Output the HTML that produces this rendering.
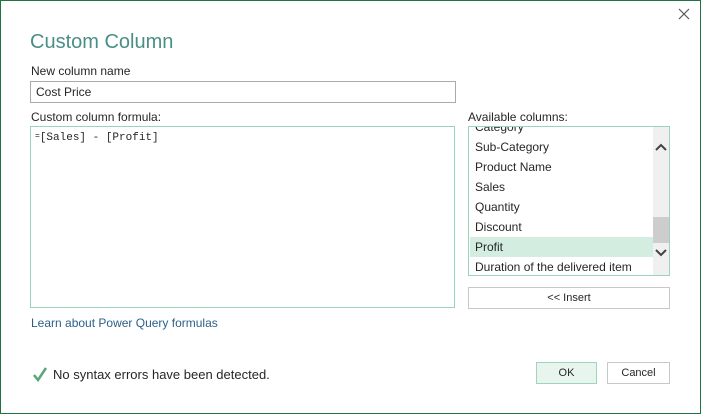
<!DOCTYPE html><html><head><style>
body{margin:0;width:701px;height:414px;overflow:hidden;background:#fff;font-family:"Liberation Sans",sans-serif;font-size:12px;color:#262626}
.win{position:absolute;left:0;top:0;width:699px;height:412px;border:1px solid #217346;background:#fff}
.a{position:absolute}
.it{position:absolute;left:1px;width:183px;height:20px;line-height:20px;padding-left:5px;font-size:12px}
</style></head><body><div class="win"></div>
<svg class="a" style="left:678px;top:8px" width="12" height="12"><path d="M1 1 L11 11 M11 1 L1 11" stroke="#555" stroke-width="1.2"/></svg>
<div class="a" style="left:30px;top:31px;font-size:20px;color:#4a8f87">Custom Column</div>
<div class="a" style="left:31px;top:64px">New column name</div>
<div class="a" style="left:30px;top:81px;height:20px;border:1px solid #aaa;line-height:20px;padding-left:5px;width:419px">Cost Price</div>
<div class="a" style="left:31px;top:110px">Custom column formula:</div>
<div class="a" style="left:30px;top:126px;width:423px;height:180px;border:1px solid #99d5b9"></div>
<div class="a" style="left:35px;top:132px;font-family:'Liberation Mono',monospace;font-size:11px"><span style="font-size:8px;vertical-align:top">=</span>[Sales] - [Profit]</div>
<div class="a" style="left:468px;top:110px">Available columns:</div>
<div class="a" style="left:468px;top:126px;width:200px;height:148px;border:1px solid #99d5b9;overflow:hidden">
<div class="it" style="top:-10px">Category</div>
<div class="it" style="top:10px">Sub-Category</div>
<div class="it" style="top:30px">Product Name</div>
<div class="it" style="top:50px">Sales</div>
<div class="it" style="top:70px">Quantity</div>
<div class="it" style="top:90px">Discount</div>
<div class="it" style="top:110px;background:#d3eee0">Profit</div>
<div class="it" style="top:130px">Duration of the delivered item</div>
<div class="a" style="left:184px;top:0;width:16px;height:148px;background:#f0f0f0"></div>
<div class="a" style="left:184px;top:90px;width:16px;height:26px;background:#cdcdcd"></div>
<svg class="a" style="left:186px;top:16px" width="12" height="10"><path d="M1 7 L6 2 L11 7" stroke="#444" stroke-width="2" fill="none"/></svg>
<svg class="a" style="left:186px;top:120px" width="12" height="10"><path d="M1 3 L6 8 L11 3" stroke="#444" stroke-width="2" fill="none"/></svg>
</div>
<div class="a" style="left:468px;top:287px;width:200px;height:20px;border:1px solid #c8c8c8;text-align:center;line-height:20px;font-size:11px">&lt;&lt; Insert</div>
<div class="a" style="left:31px;top:316px;color:#2b5f8a">Learn about Power Query formulas</div>
<svg class="a" style="left:32px;top:366px" width="16" height="16"><path d="M2 9 L6 14 L14 2" stroke="#5aa47c" stroke-width="2.5" fill="none"/></svg>
<div class="a" style="left:53px;top:367px;font-size:13px">No syntax errors have been detected.</div>
<div class="a" style="left:536px;top:362px;width:59px;height:20px;border:1px solid #9fd6bb;background:#e8f5ee;text-align:center;line-height:20px;font-size:11px">OK</div>
<div class="a" style="left:607px;top:362px;width:61px;height:20px;border:1px solid #c8c8c8;text-align:center;line-height:20px;font-size:11px">Cancel</div>
</body></html>
